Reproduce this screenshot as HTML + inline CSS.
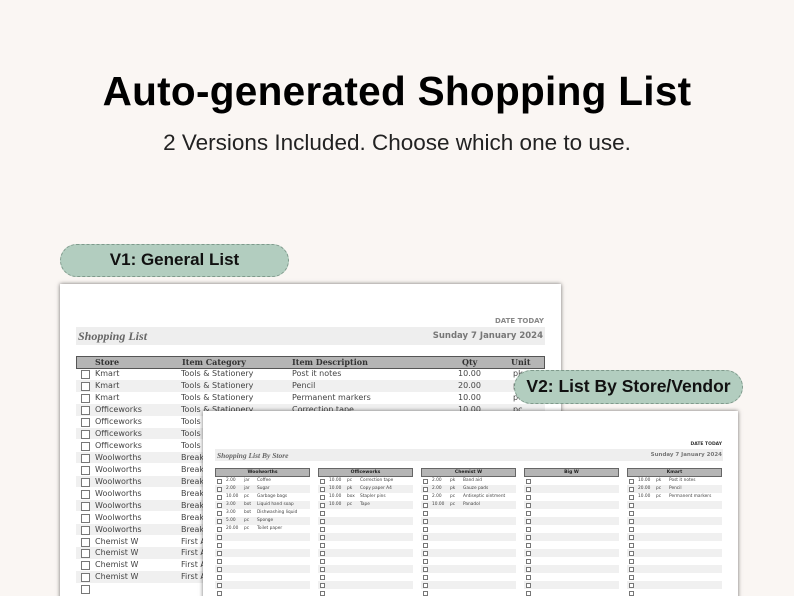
<!DOCTYPE html>
<html style="width:794px;height:596px;overflow:hidden"><head><meta charset="utf-8"><style>
*{margin:0;padding:0;box-sizing:border-box}
body{width:794px;height:596px;background:#faf6f3;position:relative;overflow:hidden;font-family:"Liberation Sans",sans-serif}
.t{position:absolute;left:0;width:794px;text-align:center;color:#000}
.pill{position:absolute;background:#b2cdbf;border:1.5px dashed #7f9a8c;border-radius:17px;font-weight:bold;color:#111;font-size:17px;line-height:30px;text-align:center}
.sheet{position:absolute;background:#fff;box-shadow:0 0 4px rgba(0,0,0,.55);overflow:hidden}
.abs{position:absolute}
.s1 .row{position:absolute;left:16px;width:469px;height:11.9px;font-family:"DejaVu Sans",sans-serif;font-size:8px;color:#444;line-height:11.9px}
.s1 .row.g{background:#f0f0f0}
.s1 .row span{position:absolute}
.cb{position:absolute;width:8px;height:8px;border:1px solid #777;background:#fff}
.s1 .cb{left:5px;top:2px;width:9px;height:9px}
.col{position:absolute;top:57px;width:95px}
.col .h{height:9px;background:#b5b5b5;border:1px solid #666;font-size:4.5px;font-weight:bold;text-align:center;line-height:8px;font-family:"DejaVu Sans",sans-serif;color:#222}
.col .r{position:relative;height:8px;font-size:4.3px;line-height:8px;color:#444;font-family:"DejaVu Sans",sans-serif}
.col .r:nth-child(odd){background:#f0f0f0}
.col .r .cb{left:2px;top:1.5px;width:5px;height:5px;border:.7px solid #777}
.col .r span{position:absolute}
</style></head><body>
<div class="t" style="top:68px;font-size:40.5px;font-weight:bold;letter-spacing:.3px">Auto-generated Shopping List</div>
<div class="t" style="top:130px;font-size:22.5px;color:#222">2 Versions Included. Choose which one to use.</div>

<div class="pill" style="left:60px;top:244px;width:229px;height:33px">V1: General List</div>

<div class="sheet s1" style="left:60px;top:284px;width:501px;height:330px">
 <div class="abs" style="right:17px;top:33px;font-size:7px;font-weight:bold;color:#888;font-family:'DejaVu Sans',sans-serif">DATE TODAY</div>
 <div class="abs" style="left:16px;top:43px;width:469px;height:18px;background:#eeeeee"></div>
 <div class="abs" style="left:18px;top:45px;font-size:12px;font-weight:bold;font-style:italic;color:#666;font-family:'Liberation Serif',serif">Shopping List</div>
 <div class="abs" style="right:18px;top:47px;font-size:8.5px;font-weight:bold;color:#777;font-family:'DejaVu Sans',sans-serif">Sunday 7 January 2024</div>
 <div class="abs" style="left:16px;top:72px;width:469px;height:13px;background:#b5b5b5;border:1px solid #555;font-size:8px;font-weight:bold;color:#333;font-family:'DejaVu Serif',serif;line-height:11px">
  <span class="abs" style="left:18px">Store</span><span class="abs" style="left:105px">Item Category</span><span class="abs" style="left:215px">Item Description</span><span class="abs" style="left:385px">Qty</span><span class="abs" style="left:434px">Unit</span></div>
 <div class="row" style="top:84px"><i class="cb"></i><span style="left:19px">Kmart</span><span style="left:105px">Tools &amp; Stationery</span><span style="left:216px">Post it notes</span><span style="left:382px">10.00</span><span style="left:437px">pk</span></div>
 <div class="row g" style="top:96px"><i class="cb"></i><span style="left:19px">Kmart</span><span style="left:105px">Tools &amp; Stationery</span><span style="left:216px">Pencil</span><span style="left:382px">20.00</span><span style="left:437px">pc</span></div>
 <div class="row" style="top:108px"><i class="cb"></i><span style="left:19px">Kmart</span><span style="left:105px">Tools &amp; Stationery</span><span style="left:216px">Permanent markers</span><span style="left:382px">10.00</span><span style="left:437px">pc</span></div>
 <div class="row g" style="top:120px"><i class="cb"></i><span style="left:19px">Officeworks</span><span style="left:105px">Tools &amp; Stationery</span><span style="left:216px">Correction tape</span><span style="left:382px">10.00</span><span style="left:437px">pc</span></div>
 <div class="row" style="top:131.5px"><i class="cb"></i><span style="left:19px">Officeworks</span><span style="left:105px">Tools</span></div>
 <div class="row g" style="top:143.5px"><i class="cb"></i><span style="left:19px">Officeworks</span><span style="left:105px">Tools</span></div>
 <div class="row" style="top:155.5px"><i class="cb"></i><span style="left:19px">Officeworks</span><span style="left:105px">Tools</span></div>
 <div class="row g" style="top:167.5px"><i class="cb"></i><span style="left:19px">Woolworths</span><span style="left:105px">Break</span></div>
 <div class="row" style="top:179.5px"><i class="cb"></i><span style="left:19px">Woolworths</span><span style="left:105px">Break</span></div>
 <div class="row g" style="top:191.5px"><i class="cb"></i><span style="left:19px">Woolworths</span><span style="left:105px">Break</span></div>
 <div class="row" style="top:203.5px"><i class="cb"></i><span style="left:19px">Woolworths</span><span style="left:105px">Break</span></div>
 <div class="row g" style="top:215.5px"><i class="cb"></i><span style="left:19px">Woolworths</span><span style="left:105px">Break</span></div>
 <div class="row" style="top:227.5px"><i class="cb"></i><span style="left:19px">Woolworths</span><span style="left:105px">Break</span></div>
 <div class="row g" style="top:239.5px"><i class="cb"></i><span style="left:19px">Woolworths</span><span style="left:105px">Break</span></div>
 <div class="row" style="top:251.5px"><i class="cb"></i><span style="left:19px">Chemist W</span><span style="left:105px">First A</span></div>
 <div class="row g" style="top:263px"><i class="cb"></i><span style="left:19px">Chemist W</span><span style="left:105px">First A</span></div>
 <div class="row" style="top:275px"><i class="cb"></i><span style="left:19px">Chemist W</span><span style="left:105px">First A</span></div>
 <div class="row g" style="top:287px"><i class="cb"></i><span style="left:19px">Chemist W</span><span style="left:105px">First A</span></div>
 <div class="row" style="top:299px"><i class="cb"></i></div>
</div>

<div class="pill" style="left:514px;top:370px;width:229px;height:34px;font-size:17.5px;line-height:31px">V2: List By Store/Vendor</div>

<div class="sheet" style="left:203px;top:411px;width:535px;height:200px">
 <div class="abs" style="right:16px;top:31px;font-size:4.5px;font-weight:bold;color:#333;font-family:'DejaVu Sans',sans-serif">DATE TODAY</div>
 <div class="abs" style="left:12px;top:38px;width:508px;height:12px;background:#eeeeee"></div>
 <div class="abs" style="left:14px;top:40px;font-size:7.5px;font-weight:bold;font-style:italic;color:#666;font-family:'Liberation Serif',serif">Shopping List By Store</div>
 <div class="abs" style="right:16px;top:41px;font-size:5.5px;font-weight:bold;color:#777;font-family:'DejaVu Sans',sans-serif">Sunday 7 January 2024</div>

 <div class="col" style="left:12px"><div class="h">Woolworths</div>
  <div class="r"><i class="cb"></i><span style="left:11px">2.00</span><span style="left:29px">jar</span><span style="left:42px">Coffee</span></div>
  <div class="r"><i class="cb"></i><span style="left:11px">2.00</span><span style="left:29px">jar</span><span style="left:42px">Sugar</span></div>
  <div class="r"><i class="cb"></i><span style="left:11px">10.00</span><span style="left:29px">pc</span><span style="left:42px">Garbage bags</span></div>
  <div class="r"><i class="cb"></i><span style="left:11px">3.00</span><span style="left:29px">bot</span><span style="left:42px">Liquid hand soap</span></div>
  <div class="r"><i class="cb"></i><span style="left:11px">3.00</span><span style="left:29px">bot</span><span style="left:42px">Dishwashing liquid</span></div>
  <div class="r"><i class="cb"></i><span style="left:11px">5.00</span><span style="left:29px">pc</span><span style="left:42px">Sponge</span></div>
  <div class="r"><i class="cb"></i><span style="left:11px">20.00</span><span style="left:29px">pc</span><span style="left:42px">Toilet paper</span></div>
  <div class="r"><i class="cb"></i></div><div class="r"><i class="cb"></i></div><div class="r"><i class="cb"></i></div><div class="r"><i class="cb"></i></div><div class="r"><i class="cb"></i></div><div class="r"><i class="cb"></i></div><div class="r"><i class="cb"></i></div><div class="r"><i class="cb"></i></div></div>

 <div class="col" style="left:115px"><div class="h">Officeworks</div>
  <div class="r"><i class="cb"></i><span style="left:11px">10.00</span><span style="left:29px">pc</span><span style="left:42px">Correction tape</span></div>
  <div class="r"><i class="cb"></i><span style="left:11px">10.00</span><span style="left:29px">pk</span><span style="left:42px">Copy paper A4</span></div>
  <div class="r"><i class="cb"></i><span style="left:11px">10.00</span><span style="left:29px">box</span><span style="left:42px">Stapler pins</span></div>
  <div class="r"><i class="cb"></i><span style="left:11px">10.00</span><span style="left:29px">pc</span><span style="left:42px">Tape</span></div>
  <div class="r"><i class="cb"></i></div><div class="r"><i class="cb"></i></div><div class="r"><i class="cb"></i></div><div class="r"><i class="cb"></i></div><div class="r"><i class="cb"></i></div><div class="r"><i class="cb"></i></div><div class="r"><i class="cb"></i></div><div class="r"><i class="cb"></i></div><div class="r"><i class="cb"></i></div><div class="r"><i class="cb"></i></div><div class="r"><i class="cb"></i></div></div>

 <div class="col" style="left:218px"><div class="h">Chemist W</div>
  <div class="r"><i class="cb"></i><span style="left:11px">2.00</span><span style="left:29px">pk</span><span style="left:42px">Band aid</span></div>
  <div class="r"><i class="cb"></i><span style="left:11px">2.00</span><span style="left:29px">pk</span><span style="left:42px">Gauze pads</span></div>
  <div class="r"><i class="cb"></i><span style="left:11px">2.00</span><span style="left:29px">pc</span><span style="left:42px">Antiseptic ointment</span></div>
  <div class="r"><i class="cb"></i><span style="left:11px">10.00</span><span style="left:29px">pc</span><span style="left:42px">Panadol</span></div>
  <div class="r"><i class="cb"></i></div><div class="r"><i class="cb"></i></div><div class="r"><i class="cb"></i></div><div class="r"><i class="cb"></i></div><div class="r"><i class="cb"></i></div><div class="r"><i class="cb"></i></div><div class="r"><i class="cb"></i></div><div class="r"><i class="cb"></i></div><div class="r"><i class="cb"></i></div><div class="r"><i class="cb"></i></div><div class="r"><i class="cb"></i></div></div>

 <div class="col" style="left:321px"><div class="h">Big W</div>
  <div class="r"><i class="cb"></i></div><div class="r"><i class="cb"></i></div><div class="r"><i class="cb"></i></div><div class="r"><i class="cb"></i></div><div class="r"><i class="cb"></i></div><div class="r"><i class="cb"></i></div><div class="r"><i class="cb"></i></div><div class="r"><i class="cb"></i></div><div class="r"><i class="cb"></i></div><div class="r"><i class="cb"></i></div><div class="r"><i class="cb"></i></div><div class="r"><i class="cb"></i></div><div class="r"><i class="cb"></i></div><div class="r"><i class="cb"></i></div><div class="r"><i class="cb"></i></div></div>

 <div class="col" style="left:424px"><div class="h">Kmart</div>
  <div class="r"><i class="cb"></i><span style="left:11px">10.00</span><span style="left:29px">pk</span><span style="left:42px">Post it notes</span></div>
  <div class="r"><i class="cb"></i><span style="left:11px">20.00</span><span style="left:29px">pc</span><span style="left:42px">Pencil</span></div>
  <div class="r"><i class="cb"></i><span style="left:11px">10.00</span><span style="left:29px">pc</span><span style="left:42px">Permanent markers</span></div>
  <div class="r"><i class="cb"></i></div><div class="r"><i class="cb"></i></div><div class="r"><i class="cb"></i></div><div class="r"><i class="cb"></i></div><div class="r"><i class="cb"></i></div><div class="r"><i class="cb"></i></div><div class="r"><i class="cb"></i></div><div class="r"><i class="cb"></i></div><div class="r"><i class="cb"></i></div><div class="r"><i class="cb"></i></div><div class="r"><i class="cb"></i></div><div class="r"><i class="cb"></i></div></div>
</div>
</body></html>
